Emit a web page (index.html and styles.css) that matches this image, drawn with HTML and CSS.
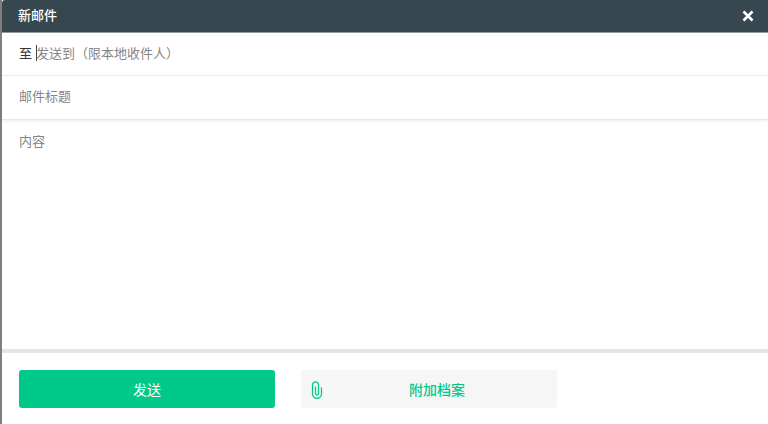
FILE: index.html
```html
<!DOCTYPE html>
<html lang="zh-CN">
<head>
  <meta charset="UTF-8">
  <title>新邮件</title>
  <link rel="stylesheet" href="styles.css">
</head>
<body>
  <div class="compose">
    <!-- Header -->
    <div class="compose-header">
      <span class="compose-title">新邮件</span>
      <svg class="close-icon" width="12" height="12" viewBox="0 0 12 12">
        <path d="M1.5 1.5 L10.5 10.5 M10.5 1.5 L1.5 10.5" stroke="#fff" stroke-width="2.6" fill="none"/>
      </svg>
    </div>

    <!-- Fields -->
    <div class="field field-to">
      <span class="to-label">至</span>
      <span class="caret"></span>
      <span class="placeholder">发送到（限本地收件人）</span>
    </div>
    <div class="field field-subject">
      <span class="placeholder">邮件标题</span>
    </div>
    <div class="body-area">
      <span class="placeholder">内容</span>
    </div>

    <!-- Footer -->
    <div class="compose-footer">
      <button class="send-btn">发送</button>
      <button class="attach-btn">
        <svg class="clip-icon" width="12" height="18" viewBox="0 0 12 18">
          <path d="M4.5 6 V12.6 A1.5 1.5 0 0 0 7.5 12.6 V3.8 A3 3 0 0 0 1.5 3.8 V12.8 A4.5 4.5 0 0 0 10.5 12.8 V7" stroke="#00c98a" stroke-width="1.3" fill="none" stroke-linecap="round"/>
        </svg>
        <span>附加档案</span>
      </button>
    </div>
  </div>
</body>
</html>
```

FILE: styles.css
```css
* {
  box-sizing: border-box;
  margin: 0;
  padding: 0;
  font-family: "Liberation Sans", "Noto Sans CJK SC", sans-serif;
}
html, body {
  height: 100%;
  overflow: hidden;
  background: #fff;
}
/* Dialog */
.compose {
  height: 424px;
  display: flex;
  flex-direction: column;
  border-left: 2px solid #7f7f7f;
  background: #fff;
}
.compose-header {
  height: 33px;
  padding: 0 14px 3px 16px;
  display: flex;
  justify-content: space-between;
  align-items: center;
  background: #37474f;
  border-bottom: 1px solid #8f9a9f;
  border-top-left-radius: 3px;
}
.compose-title {
  color: #fff;
  font-size: 13px;
  font-weight: 500;
}
.close-icon {
  margin-top: 3px;
}
/* Fields */
.field {
  padding: 0 17px 3px;
  display: flex;
  align-items: center;
  font-size: 13px;
}
.field-to {
  height: 43px;
  border-bottom: 1px solid #eceeef;
}
.field-subject {
  height: 44px;
  padding-bottom: 5px;
  border-bottom: 1px solid #e8e8e8;
  box-shadow: 0 1px 3px rgba(0, 0, 0, 0.08);
}
.to-label {
  color: #333;
  margin-right: 4px;
}
.caret {
  width: 1px;
  height: 16px;
  margin-right: -1px;
  background: #444;
}
.placeholder {
  color: #858585;
  font-size: 13px;
}
.body-area {
  flex: 1;
  padding: 12px 17px;
  line-height: 18px;
}
/* Footer */
.compose-footer {
  height: 75px;
  padding: 17px 17px 0;
  display: flex;
  gap: 26px;
  border-top: 4px solid #e4e7e9;
}
.send-btn, .attach-btn {
  width: 256px;
  height: 38px;
  border: none;
  border-radius: 3px;
  font-size: 14px;
}
.send-btn {
  background: #00c98a;
  color: #fff;
}
.attach-btn {
  position: relative;
  padding-left: 16px;
  background: #f6f6f6;
  color: #00c98a;
  font-weight: 500;
}
.clip-icon {
  position: absolute;
  left: 10px;
  top: 11px;
}
```
